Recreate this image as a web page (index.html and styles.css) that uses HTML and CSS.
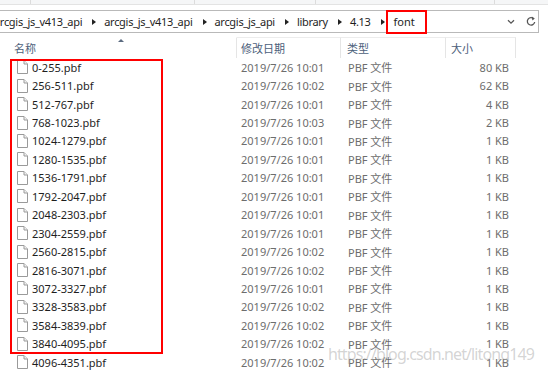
FILE: index.html
```html
<!DOCTYPE html>
<html>
<head>
    <title>font</title>
    <link rel="stylesheet" href="styles.css">
</head>
<body>
    <div class="ribbon">
        <span class="tab t1"></span>
        <span class="tab t2"></span>
        <span class="tab t3"></span>
        <span class="tab t4"></span>
    </div>

    <div class="toolbar">
        <div class="address">
            <div class="crumbs">
                <span class="crumb">arcgis_js_v413_api</span>
                <span class="sep"></span>
                <span class="crumb">arcgis_js_v413_api</span>
                <span class="sep"></span>
                <span class="crumb">arcgis_js_api</span>
                <span class="sep"></span>
                <span class="crumb">library</span>
                <span class="sep"></span>
                <span class="crumb">4.13</span>
                <span class="sep last"></span>
                <span class="crumb current">font</span>
            </div>
            <div class="address-tools">
                <svg class="chevron" width="8" height="6" viewBox="0 0 8 6"><path d="M1 1.2 L4 4.2 L7 1.2" fill="none" stroke="#555" stroke-width="1.3"/></svg>
                <svg class="refresh" width="10" height="11" viewBox="0 0 10 11"><path d="M7.9 3 A3.7 3.7 0 1 0 8.7 6" fill="none" stroke="#555" stroke-width="1.3"/><path d="M5.8 0.6 L8.7 2.4 L6.3 4.5 Z" fill="#555"/></svg>
            </div>
        </div>
    </div>

    <div class="files">
        <div class="head name">名称<span class="sort"></span></div>
        <div class="head date">修改日期</div>
        <div class="head type">类型</div>
        <div class="head size">大小</div>
    </div>

    <div class="rows" id="rows"></div>

    <div class="mark mark-list"></div>
    <div class="watermark">https://blog.csdn.net/litong149</div>

    <script>
        let files = [
            ["0-255.pbf", "10:01", "80 KB"],
            ["256-511.pbf", "10:02", "62 KB"],
            ["512-767.pbf", "10:01", "4 KB"],
            ["768-1023.pbf", "10:03", "2 KB"],
            ["1024-1279.pbf", "10:01", "1 KB"],
            ["1280-1535.pbf", "10:01", "1 KB"],
            ["1536-1791.pbf", "10:01", "1 KB"],
            ["1792-2047.pbf", "10:01", "1 KB"],
            ["2048-2303.pbf", "10:01", "1 KB"],
            ["2304-2559.pbf", "10:01", "1 KB"],
            ["2560-2815.pbf", "10:02", "1 KB"],
            ["2816-3071.pbf", "10:02", "1 KB"],
            ["3072-3327.pbf", "10:01", "1 KB"],
            ["3328-3583.pbf", "10:02", "1 KB"],
            ["3584-3839.pbf", "10:02", "1 KB"],
            ["3840-4095.pbf", "10:02", "1 KB"],
            ["4096-4351.pbf", "10:02", "1 KB"]
        ];

        let rows = document.getElementById("rows");
        let icon = '<svg class="file-icon" width="11" height="14" viewBox="0 0 11 14">' +
            '<path d="M0.5 0.5 H7 L10.5 4 V13.5 H0.5 Z" fill="#fff" stroke="#9a9a9a"/>' +
            '<path d="M7 0.5 V4 H10.5" fill="#f2f2f2" stroke="#9a9a9a"/></svg>';

        files.forEach(function (f) {
            let row = document.createElement("div");
            row.className = "row";
            row.innerHTML =
                '<div class="cell name">' + icon + '<span>' + f[0] + '</span></div>' +
                '<div class="cell date">2019/7/26 ' + f[1] + '</div>' +
                '<div class="cell type">PBF 文件</div>' +
                '<div class="cell size">' + f[2] + '</div>';
            rows.appendChild(row);
        });
    </script>
</body>
</html>
```

FILE: styles.css
```css
body {
    margin: 0;
    width: 548px;
    height: 373px;
    overflow: hidden;
    position: relative;
    background: #fff;
    font-family: "Noto Sans", "Noto Sans CJK SC", sans-serif;
    font-size: 11px;
    color: #1e1e1e;
}

.ribbon {
    height: 4px;
    background: #f5f6f7;
    border-bottom: 1px solid #e3e3e3;
    display: flex;
}
.tab {
    border-right: 1px solid #dcdcdc;
}
.t1 { width: 30px; }
.t2 { width: 163px; }
.t3 { width: 120px; }
.t4 { width: 178px; }

.toolbar {
    padding: 5px 9px 0 0;
}
.address {
    height: 21px;
    border: 1px solid #b9b9b9;
    border-left: none;
    display: flex;
    align-items: center;
    justify-content: space-between;
}
.crumbs {
    display: flex;
    align-items: center;
    margin-left: -6px;
    height: 100%;
}
.crumb {
    color: #1e1e1e;
    font-size: 11px;
    letter-spacing: -0.3px;
}
.sep {
    width: 0;
    height: 0;
    margin: 0 8px 0 10px;
    border-top: 3px solid transparent;
    border-bottom: 3px solid transparent;
    border-left: 4px solid #222;
}
.sep.last {
    margin-right: 1px;
}
.crumb.current {
    position: relative;
    padding: 0 12px 0 8px;
    letter-spacing: 0;
}
.crumb.current::before {
    content: "";
    position: absolute;
    left: 0;
    top: -4px;
    bottom: -5px;
    right: 0;
    border: 2px solid #f00;
}
.address-tools {
    display: flex;
    align-items: center;
    gap: 11px;
    padding-right: 2px;
}

.files {
    margin-top: 4px;
    display: grid;
    grid-template-columns: 237px 104px 105px 70px;
    height: 21px;
}
.head {
    color: #4c607a;
    border-top: 1px solid #ececec;
    border-right: 1px solid #e5e5e5;
    display: flex;
    align-items: center;
    position: relative;
}
.head.name {
    padding-left: 14px;
    border-top-color: transparent;
}
.head.date { padding-left: 4px; }
.head.type { padding-left: 6px; }
.head.size { padding-left: 5px; }
.sort {
    position: absolute;
    left: 118px;
    top: 1px;
    width: 0;
    height: 0;
    border-left: 3px solid transparent;
    border-right: 3px solid transparent;
    border-bottom: 3px solid #5b6b80;
}

.row {
    display: grid;
    grid-template-columns: 237px 104px 105px 70px;
    height: 18.44px;
    align-items: center;
}
.cell {
    white-space: nowrap;
    color: #6d6d6d;
}
.cell.name {
    color: #1e1e1e;
    padding-left: 17px;
    display: flex;
    align-items: center;
    gap: 4px;
}
.cell.date { padding-left: 4px; }
.cell.type { padding-left: 7px; }
.cell.size {
    text-align: right;
    padding-right: 7px;
}

.mark {
    position: absolute;
    border: 2px solid #f00;
}
.mark-list {
    left: 10px;
    top: 59px;
    width: 149px;
    height: 291px;
}

.watermark {
    position: absolute;
    left: 328px;
    top: 343px;
    font-size: 16px;
    color: rgba(160, 160, 160, 0.45);
    letter-spacing: -0.9px;
}
```
